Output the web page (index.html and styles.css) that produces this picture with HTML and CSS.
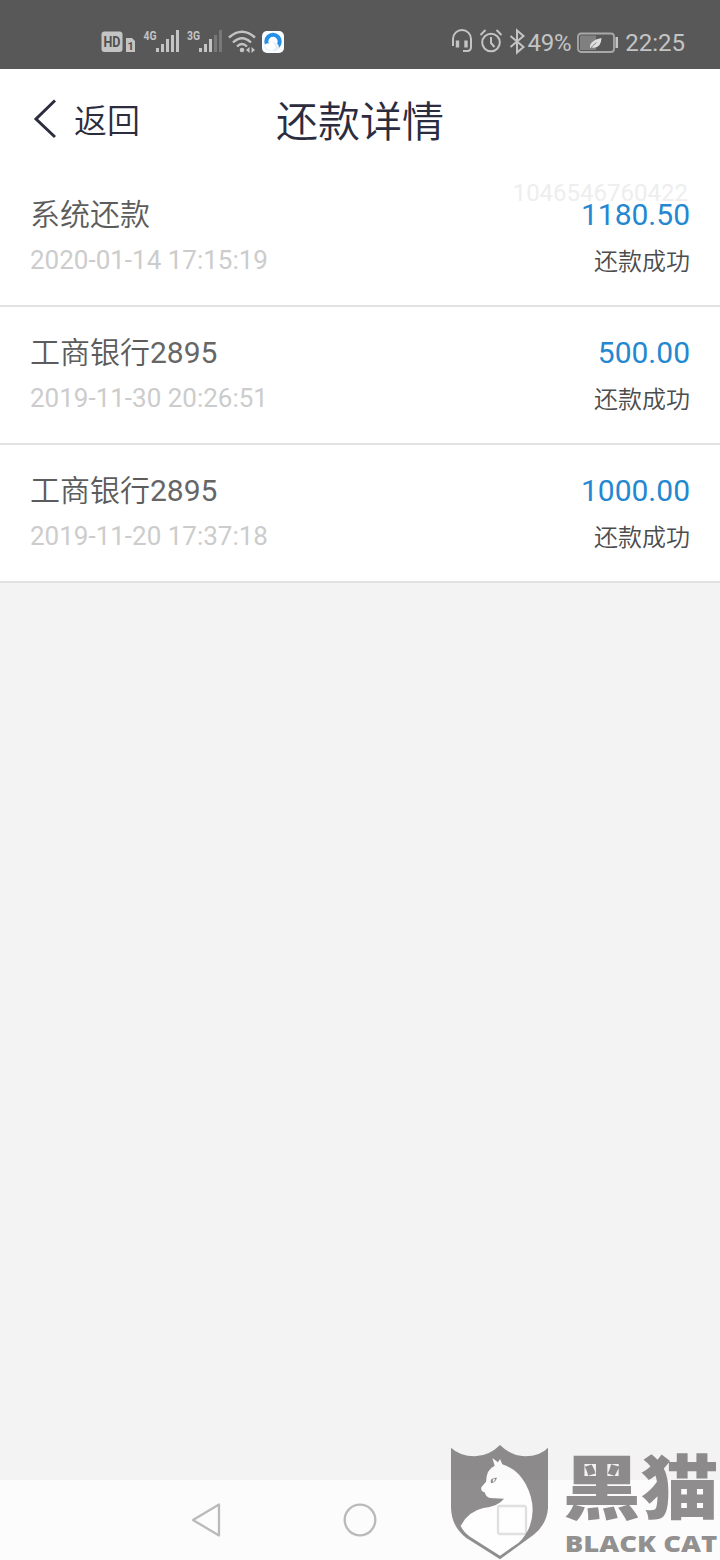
FILE: index.html
```
<!DOCTYPE html>
<html lang="zh-CN">
<head>
    <meta charset="UTF-8">
    <meta name="viewport" content="width=device-width, initial-scale=1.0">
    <title>还款详情</title>
    <link rel="stylesheet" href="styles.css">
</head>
<body>
    <div class="status-bar">
        <svg class="status-left" width="186" height="32" viewBox="0 0 186 32">
            <!-- HD + SIM -->
            <rect x="1.5" y="5.5" width="21" height="20.5" rx="3" fill="#c4c4c4"/>
            <text x="3.5" y="20.500" class="hd" textLength="17" lengthAdjust="spacingAndGlyphs">HD</text>
            <path d="M26 12h6l3 3v11h-9z" fill="#c4c4c4"/>
            <text x="27.5" y="23.5" class="sim">1</text>
            <!-- signal 4G -->
            <text x="43.5" y="14" class="net" textLength="13" lengthAdjust="spacingAndGlyphs">4G</text>
            <g fill="#c4c4c4">
                <rect x="56" y="22" width="3" height="4"/>
                <rect x="61" y="18" width="3" height="8"/>
                <rect x="66" y="13" width="3" height="13"/>
                <rect x="71" y="9" width="3" height="17"/>
                <rect x="76" y="4" width="3" height="22"/>
            </g>
            <!-- signal 3G -->
            <text x="87" y="14" class="net" textLength="13" lengthAdjust="spacingAndGlyphs">3G</text>
            <g fill="#c4c4c4">
                <rect x="99" y="22" width="3" height="4"/>
                <rect x="104" y="18" width="3" height="8"/>
                <rect x="109" y="13" width="3" height="13"/>
                <rect x="114" y="9" width="3" height="17" opacity=".3"/>
                <rect x="119" y="4" width="3" height="22" opacity=".3"/>
            </g>
            <!-- wifi -->
            <g fill="none" stroke="#c4c4c4" stroke-width="2.4">
                <path d="M129 11.5Q142 0 155 11.5"/>
                <path d="M133 16.5Q142 8 151 16.5"/>
                <path d="M137 20.5Q142 15.5 147 20.5"/>
            </g>
            <circle cx="142" cy="24" r="2.3" fill="#c4c4c4"/>
            <path d="M149.5 21v6l-3.5-3zM151.5 21v6l3.5-3z" fill="#c4c4c4"/>
            <!-- browser icon -->
            <rect x="162" y="5" width="22" height="22" rx="5" fill="#fafcff"/>
            <circle cx="173" cy="15.5" r="6.7" fill="none" stroke="#248fe8" stroke-width="4"/>
            <path d="M164 20q2-4 6-2 2-3 5-1 4 0 4 5l-3 3h-7q-4-1-5-5z" fill="#e4f1fb"/>
            <path d="M165 20q0-3 4-2 1-3 4-1l3 4-4 4q-5-1-7-5z" fill="#fff"/>
        </svg>
        <div class="status-right">
            <svg width="78" height="32" viewBox="0 0 78 32" fill="none" stroke="#c4c4c4" stroke-width="2">
                <!-- headset -->
                <path d="M3 20v-7a9 9 0 0 1 18 0v8q0 4-4 4h-4"/>
                <path d="M7.5 14.5v7M16 14.5v7" stroke-width="3.4"/>
                <!-- alarm -->
                <circle cx="41" cy="16.500" r="8.8"/>
                <path d="M41 11v6l3.5 4M30.5 9l5-5M51.5 9l-5-5"/>
                <!-- bluetooth -->
                <path d="M60.5 10l13 11-6.500 5.500V4.500l6.500 5.500-13 11"/>
            </svg>
            <span class="percent">49%</span>
            <svg class="battery" width="42" height="22" viewBox="0 0 42 22">
                <rect x="1" y="1.500" width="36" height="18.5" rx="3" fill="none" stroke="#a8a8a8" stroke-width="1.8"/>
                <rect x="3" y="3.500" width="16" height="14.5" fill="#808080"/>
                <path d="M13 16.500q-1-8 11.5-10.5-.5 11-9.5 9.5z" fill="#e0e0e0"/>
                <path d="M12.5 17.500q3-4 7-7" stroke="#858585" fill="none"/>
                <rect x="38.500" y="5" width="2.5" height="11" fill="#c4c4c4"/>
            </svg>
            <span>22:25</span>
        </div>
    </div>

    <div class="header">
        <div class="back">
            <svg width="24" height="40" viewBox="0 0 24 40">
                <path d="M23 1.5L4 20l19 18" fill="none" stroke="#2b2d3e" stroke-width="3"/>
            </svg>
            <span>返回</span>
        </div>
        <h1>还款详情</h1>
    </div>

    <div class="list">
        <span class="serial">1046546760422</span>
        <div class="item">
            <div class="line">
                <span class="name">系统还款</span>
                <span class="amount">1180.50</span>
            </div>
            <div class="line">
                <span class="date">2020-01-14 17:15:19</span>
                <span class="state">还款成功</span>
            </div>
        </div>
        <div class="item">
            <div class="line">
                <span class="name">工商银行<span class="tail">2895</span></span>
                <span class="amount">500.00</span>
            </div>
            <div class="line">
                <span class="date">2019-11-30 20:26:51</span>
                <span class="state">还款成功</span>
            </div>
        </div>
        <div class="item">
            <div class="line">
                <span class="name">工商银行<span class="tail">2895</span></span>
                <span class="amount">1000.00</span>
            </div>
            <div class="line">
                <span class="date">2019-11-20 17:37:18</span>
                <span class="state">还款成功</span>
            </div>
        </div>
    </div>

    <div class="nav-bar">
        <svg width="36" height="36" viewBox="0 0 36 36"><path d="M29 2.5v31L3 18z"/></svg>
        <svg width="36" height="36" viewBox="0 0 36 36"><circle cx="18" cy="18" r="15.3"/></svg>
        <svg width="36" height="36" viewBox="0 0 36 36"><rect x="4" y="4" width="28" height="28" rx="2"/></svg>
    </div>

    <svg class="watermark" viewBox="0 0 840 390">
        <path class="cat" d="M62 288Q82 245 130 234 176 228 192 206L150 204Q137 201 134 187 121 184 124 172L138 155Q139 118 164 107L157 84 174 97 180 87 187 103Q232 117 257 162 278 202 278 240 277 300 236 338L180 377 90 320Q72 308 62 288Z"/>
        <path class="mark" fill-rule="evenodd" d="M33 53Q57 77 105 79 147 78 180 45 213 78 255 79 303 77 324 53V235Q320 284 280 315L180 388 78 323Q33 288 33 230ZM62 288Q82 245 130 234 176 228 192 206L150 204Q137 201 134 187 121 184 124 172L138 155Q139 118 164 107L157 84 174 97 180 87 187 103Q232 117 257 162 278 202 278 240 277 300 236 338L180 377 90 320Q72 308 62 288Z"/>
        <path class="mark" d="M152 152Q155 142 171 143 166 158 153 160Z"/>
        <path d="M161 145l4 3-4 9-3-5z" fill="#fff"/>
        <text class="mark brand" x="368" y="252" textLength="468" lengthAdjust="spacingAndGlyphs">黑猫</text>
        <text class="mark brand-en" x="374" y="367" textLength="458" lengthAdjust="spacingAndGlyphs">BLACK CAT</text>
    </svg>
</body>
</html>
```

FILE: styles.css
```
* {
    box-sizing: border-box;
}
body {
    margin: 0;
    height: 1560px;
    display: flex;
    flex-direction: column;
    position: relative;
    overflow: hidden;
    background: #f3f3f3;
    font-family: Roboto, "Noto Sans CJK SC", sans-serif;
}
svg {
    display: block;
    flex-shrink: 0;
}
.status-bar {
    height: 69px;
    padding: 14px 35px 0 100px;
    display: flex;
    justify-content: space-between;
    align-items: center;
    background: #585858;
    color: #c4c4c4;
    font-size: 24px;
}
.status-right {
    display: flex;
    align-items: center;
    height: 32px;
}
.status-right span {
    line-height: 32px;
    padding-top: 3px;
}
.status-right .percent {
    letter-spacing: -0.3px;
}
.battery {
    margin: 2px 6px 0;
}
.hd {
    font-size: 14px;
    font-weight: 700;
    fill: #505050;
}
.sim {
    font-size: 11px;
    font-weight: 700;
    fill: #505050;
}
.net {
    font-size: 13px;
    font-weight: 700;
    fill: #c4c4c4;
}

.header {
    height: 100px;
    display: grid;
    grid-template-columns: 1fr auto 1fr;
    align-items: center;
    padding: 2px 32px 0;
    background: #fff;
    color: #2b2d3e;
}
.back {
    display: flex;
    align-items: center;
    gap: 18px;
    font-size: 33px;
    font-weight: 350;
}
.back svg {
    margin-bottom: 3px;
}
.back span {
    margin-bottom: 2px;
}
.header h1 {
    margin: 5px 0 0;
    font-size: 42px;
    font-weight: 350;
    line-height: 60px;
}

.list {
    position: relative;
    background: #fff;
}
.item {
    height: 138px;
    padding: 23px 30px 0;
    border-bottom: 2px solid #e2e2e2;
}
.line {
    display: flex;
    justify-content: space-between;
    align-items: center;
    height: 45px;
}
.name {
    margin-bottom: 6px;
    font-size: 30px;
    font-weight: 350;
    color: #5c5c5c;
}
.tail {
    font-weight: 400;
    color: #666;
}
.amount {
    font-size: 30px;
    color: #2488d0;
}
.date {
    font-size: 26px;
    color: #ccc;
}
.state {
    font-size: 24px;
    font-weight: 350;
    color: #4c4c4c;
}
/* faint serial number behind the first amount */
.serial {
    position: absolute;
    top: 10px;
    right: 32px;
    font-size: 24px;
    line-height: 28px;
    color: #eee;
}

.nav-bar {
    margin-top: auto;
    height: 80px;
    padding: 0 190px;
    display: flex;
    justify-content: space-between;
    align-items: center;
    background: #fcfcfc;
}
.nav-bar svg {
    fill: none;
    stroke: #bababa;
    stroke-width: 2.3;
    stroke-linejoin: round;
}

.watermark {
    position: absolute;
    right: 0;
    bottom: 0;
    width: 280px;
    height: 130px;
}
.mark {
    fill: rgba(92, 88, 88, 0.68);
}
.cat {
    fill: rgba(255, 255, 255, 0.55);
}
.brand {
    font-family: "Noto Sans CJK SC", sans-serif;
    font-size: 212px;
    font-weight: 900;
}
.brand-en {
    font-family: "Open Sans", sans-serif;
    font-size: 66px;
    font-weight: 800;
}
```
